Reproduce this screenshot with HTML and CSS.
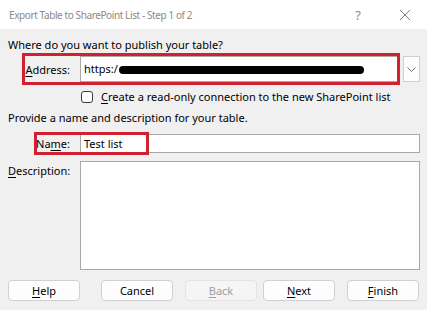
FILE: index.html
```html
<!DOCTYPE html>
<html lang="en">
<head>
    <meta charset="UTF-8">
    <title>Export Table to SharePoint List - Step 1 of 2</title>
    <link rel="stylesheet" href="styles.css">
</head>
<body>
    <div class="dialog">
        <!-- Title bar -->
        <div class="titlebar">
            <span class="title">Export Table to SharePoint List - Step 1 of 2</span>
            <span class="help-mark">?</span>
            <svg class="close" width="12" height="12" viewBox="0 0 12 12">
                <path d="M1 1 L11 11 M11 1 L1 11" stroke="#7a7a7a" stroke-width="1" fill="none"/>
            </svg>
        </div>

        <div class="content">
            <div class="question">Where do you want to publish your table?</div>

            <div class="address-row">
                <div class="redbox">
                    <label class="lbl addr-lbl"><u>A</u>ddress:</label>
                    <div class="field addr-field">https:/<span class="scribble"></span></div>
                </div>
                <div class="dropdown">
                    <svg width="9" height="5" viewBox="0 0 9 5">
                        <path d="M0.5 0.5 L4.5 4.5 L8.5 0.5" stroke="#6a6a6a" stroke-width="1" fill="none"/>
                    </svg>
                </div>
            </div>

            <div class="check-row">
                <span class="checkbox"></span>
                <span><u>C</u>reate a read-only connection to the new SharePoint list</span>
            </div>

            <div class="question second">Provide a name and description for your table.</div>

            <div class="form-row name-row">
                <label class="lbl">Na<u>m</u>e:</label>
                <div class="field name-field">Test list</div>
                <div class="name-mark"></div>
            </div>

            <div class="form-row desc-row">
                <label class="lbl"><u>D</u>escription:</label>
                <div class="field desc-field"></div>
            </div>

            <div class="buttons">
                <button class="btn"><u>H</u>elp</button>
                <button class="btn cancel">Cancel</button>
                <button class="btn back" disabled><u>B</u>ack</button>
                <button class="btn next"><u>N</u>ext</button>
                <button class="btn finish"><u>F</u>inish</button>
            </div>
        </div>
    </div>
</body>
</html>
```

FILE: styles.css
```css
body { margin: 0; font-family: "Noto Sans", "Open Sans", sans-serif; font-size: 11px; color: #000; }
u { text-decoration-thickness: 1px; text-underline-offset: 2px; }

.dialog { width: 427px; height: 310px; background-color: #f0f0f0; overflow: hidden; }

.titlebar { height: 29px; background-color: #fff; display: flex; align-items: center; padding-left: 9px; }
.title { color: #8a8a8a; font-size: 10px; letter-spacing: -0.4px; flex: 1; }
.help-mark { color: #8a8a8a; font-size: 13px; margin-right: 38px; }
.close { margin-right: 16px; }

.content { padding: 0 7px 0 8px; }
.question { line-height: 16px; margin-top: 8px; }
.question.second { margin-top: 5px; }

.address-row { display: flex; align-items: center; margin-left: 14px; }
.redbox { display: flex; align-items: center; width: 372px; height: 26px; border: 3px solid #d1202f; }
.lbl { width: 62px; padding-right: 10px; text-align: right; flex-shrink: 0; box-sizing: border-box; }
.addr-lbl { width: 55px; }
.field { background-color: #fff; border: 1px solid #a8a8a8; box-sizing: border-box; }
.addr-field { flex: 1; height: 26px; border-right: none; padding-left: 3px; line-height: 22px; display: flex; align-items: center; }
.scribble { display: inline-block; width: 245px; height: 8px; background-color: #000; border-radius: 4px; margin-left: 1px; margin-top: 2px; }
.dropdown { width: 17px; height: 26px; margin-left: 3px; background-color: #fdfdfd; border: 1px solid #cfcfcf; box-sizing: border-box; display: flex; align-items: center; justify-content: center; }

.check-row { display: flex; align-items: center; margin: 4px 0 0 73px; line-height: 16px; }
.checkbox { width: 12px; height: 12px; border: 1px solid #3a3a3a; border-radius: 3px; background-color: #fff; margin-right: 8px; box-sizing: border-box; }

.form-row { display: flex; align-items: flex-start; }
.form-row .lbl { width: 72px; }
.name-row { position: relative; margin-top: 8px; }
.name-row .lbl { line-height: 19px; }
.name-field { width: 340px; height: 19px; padding-left: 3px; line-height: 17px; }
.name-mark { position: absolute; left: 26px; top: -2px; width: 115px; height: 23px; border: 3px solid #d1202f; box-sizing: border-box; }

.desc-row { margin-top: 8px; }
.desc-row .lbl { line-height: 20px; }
.desc-field { width: 340px; height: 109px; }

.buttons { display: flex; margin-top: 10px; }
.btn { width: 72px; height: 21px; padding: 0; background-color: #fdfdfd; border: 1px solid #d0d0d0; border-radius: 4px; font-family: inherit; font-size: 11px; color: #000; }
.btn.cancel { margin-left: 21px; }
.btn.back { margin-left: 12px; color: #a0a0a0; background-color: #f5f5f5; border-color: #e4e4e4; }
.btn.next { margin-left: 6px; }
.btn.finish { margin-left: 12px; }
```
